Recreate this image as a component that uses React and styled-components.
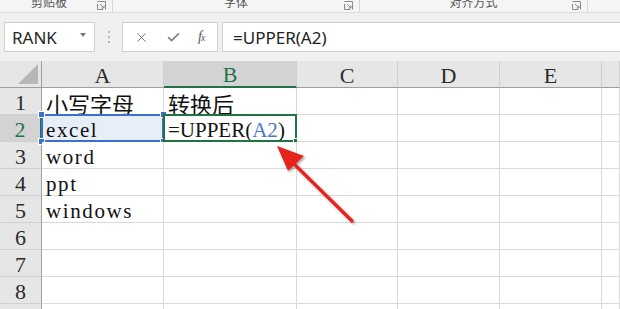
import React from "react";
import styled, { createGlobalStyle } from "styled-components";
import { X, Check } from "lucide-react";

const GlobalStyle = createGlobalStyle`
  html, body {
    margin: 0;
    padding: 0;
    background: #ffffff;
    overflow: hidden;
  }
`;

const Page = styled.div`
  width: 620px;
  height: 309px;
  overflow: hidden;
  position: relative;
  background: #f3f3f3;
  font-family: "Noto Sans", "Noto Sans CJK SC", sans-serif;
`;

const RibbonStrip = styled.div`
  display: flex;
  height: 12px;
  overflow: hidden;
  background: #f5f5f5;
  border-bottom: 1px solid #dcdcdc;
`;

const RibbonGroup = styled.div`
  flex: 0 0 ${(p) => p.$width}px;
  position: relative;
  display: flex;
  justify-content: center;
  border-right: 1px solid #d6d6d6;
  box-sizing: border-box;
`;

const GroupLabel = styled.span`
  margin-top: -6px;
  margin-left: ${(p) => p.$shift || 0}px;
  font-family: "Noto Sans CJK SC", sans-serif;
  font-size: 12px;
  line-height: 16px;
  color: #555;
`;

const Launcher = styled.svg`
  position: absolute;
  right: 6px;
  top: 1px;
`;

const FormulaBar = styled.div`
  display: flex;
  align-items: stretch;
  height: 30px;
  padding: 9px 0 9px 4px;
  background: #f0f0f0;
`;

const NameBox = styled.div`
  width: 91px;
  box-sizing: border-box;
  border: 1px solid #cfcfcf;
  background: #fff;
  display: flex;
  align-items: center;
  justify-content: space-between;
  padding: 0 8px 0 7px;
  font-size: 17px;
  color: #262626;
`;

const DropArrow = styled.span`
  width: 0;
  height: 0;
  border-left: 3.5px solid transparent;
  border-right: 3.5px solid transparent;
  border-top: 4px solid #7a7a7a;
  margin-top: -4px;
`;

const Grip = styled.div`
  width: 27px;
  display: flex;
  flex-direction: column;
  align-items: center;
  justify-content: center;
  gap: 3px;

  span {
    width: 2px;
    height: 2px;
    background: #b9b9b9;
  }
`;

const ButtonGroup = styled.div`
  width: 96px;
  box-sizing: border-box;
  border: 1px solid #cfcfcf;
  background: #fff;
  display: flex;
  align-items: center;
  justify-content: space-around;
  padding: 0 4px 0 2px;
  color: #6b6b6b;
`;

const Fx = styled.span`
  font-family: "Liberation Serif", serif;
  font-style: italic;
  font-size: 14px;
  color: #555;
  letter-spacing: -1px;

  small {
    font-size: 10px;
  }
`;

const FormulaInput = styled.div`
  flex: 1;
  margin-left: 4px;
  border: 1px solid #cfcfcf;
  border-right: none;
  background: #fff;
  display: flex;
  align-items: center;
  padding-left: 10px;
  font-size: 17px;
  color: #222;
`;

const Grid = styled.div`
  position: relative;
  display: grid;
  grid-template-columns: 42px 122px 133px 101px 102px 102px 1fr;
  grid-auto-rows: 27px;
  background: #fff;
`;

const Corner = styled.div`
  background: #e6e6e6;
  border-right: 1px solid #9e9e9e;
  border-bottom: 1px solid #9e9e9e;
  box-sizing: border-box;
  position: relative;

  &::after {
    content: "";
    position: absolute;
    right: 3px;
    bottom: 3px;
    width: 0;
    height: 0;
    border-left: 20px solid transparent;
    border-bottom: 20px solid #b7b7b7;
  }
`;

const ColHead = styled.div`
  background: ${(p) => (p.$active ? "#d3d3d3" : "#e6e6e6")};
  color: ${(p) => (p.$active ? "#217346" : "#2b2b2b")};
  border-right: 1px solid #cfcfcf;
  border-bottom: ${(p) => (p.$active ? "2px solid #217346" : "1px solid #9e9e9e")};
  box-sizing: border-box;
  display: flex;
  align-items: center;
  justify-content: center;
  font-family: "Liberation Serif", serif;
  font-size: 22px;
  line-height: 1;
  padding-top: 3px;
`;

const RowHead = styled.div`
  background: ${(p) => (p.$active ? "#d3d3d3" : "#e6e6e6")};
  color: ${(p) => (p.$active ? "#217346" : "#2b2b2b")};
  border-right: ${(p) => (p.$active ? "2px solid #217346" : "1px solid #9e9e9e")};
  border-bottom: 1px solid #cfcfcf;
  box-sizing: border-box;
  display: flex;
  align-items: center;
  justify-content: center;
  font-family: "Liberation Serif", serif;
  font-size: 22px;
  line-height: 1;
  padding-top: 3px;
`;

const Cell = styled.div`
  position: relative;
  border-right: 1px solid #d9d9d9;
  border-bottom: 1px solid #d9d9d9;
  box-sizing: border-box;
  background: ${(p) => (p.$ref ? "#e8eef8" : "#fff")};
  display: flex;
  align-items: flex-end;
  padding: 0 0 0 4px;
  font-family: ${(p) =>
    p.$cjk ? '"Noto Sans CJK SC", serif' : '"Liberation Serif", serif'};
  font-size: ${(p) => (p.$cjk ? "22px" : "21px")};
  letter-spacing: ${(p) => (p.$spaced ? "1.6px" : "0")};
  line-height: 1;
  color: #111;
  white-space: nowrap;
`;

const RefText = styled.span`
  color: #4a77c9;
`;

const SelectionBox = styled.div`
  position: absolute;
  left: -1px;
  top: -1px;
  right: -1px;
  bottom: -1px;
  border: 2px solid ${(p) => p.$color};
  pointer-events: none;
`;

const Handle = styled.span`
  position: absolute;
  width: 5px;
  height: 5px;
  background: ${(p) => p.$color};
  border: 1px solid #fff;
  ${(p) => (p.$x === "l" ? "left: -4px;" : "right: -4px;")}
  ${(p) => (p.$y === "t" ? "top: -4px;" : "bottom: -4px;")}
`;

const ArrowLayer = styled.svg`
  position: absolute;
  left: 0;
  top: 0;
  pointer-events: none;
  overflow: visible;
`;

const columns = ["A", "B", "C", "D", "E"];

const data = {
  1: ["小写字母", "转换后"],
  3: ["word"],
  4: ["ppt"],
  5: ["windows"],
};

function LauncherIcon() {
  return (
    <Launcher width="9" height="9" viewBox="0 0 9 9">
      <path d="M0.5 3 V8.5 H6" fill="none" stroke="#8a8a8a" strokeWidth="1" />
      <path d="M0.5 0.5 H8.5 V8.5" fill="none" stroke="#8a8a8a" strokeWidth="1" />
      <path d="M3 3 L7 7 M7 4.5 V7 H4.5" fill="none" stroke="#8a8a8a" strokeWidth="1" />
    </Launcher>
  );
}

export default function App() {
  const rows = [1, 2, 3, 4, 5, 6, 7, 8, 9];

  return (
    <Page>
      <GlobalStyle />
      <RibbonStrip>
        <RibbonGroup $width={113}>
          <GroupLabel $shift={-14}>剪贴板</GroupLabel>
          <LauncherIcon />
        </RibbonGroup>
        <RibbonGroup $width={247}>
          <GroupLabel>字体</GroupLabel>
          <LauncherIcon />
        </RibbonGroup>
        <RibbonGroup $width={228}>
          <GroupLabel>对齐方式</GroupLabel>
          <LauncherIcon />
        </RibbonGroup>
      </RibbonStrip>

      <FormulaBar>
        <NameBox>
          RANK
          <DropArrow />
        </NameBox>
        <Grip>
          <span />
          <span />
          <span />
        </Grip>
        <ButtonGroup>
          <X size={15} strokeWidth={1.4} />
          <Check size={15} strokeWidth={2.6} color="#7a7a7a" />
          <Fx>
            f<small>x</small>
          </Fx>
        </ButtonGroup>
        <FormulaInput>=UPPER(A2)</FormulaInput>
      </FormulaBar>

      <Grid>
        <Corner />
        {columns.map((c) => (
          <ColHead key={c} $active={c === "B"}>
            {c}
          </ColHead>
        ))}
        <ColHead />

        {rows.map((r) => {
          const vals = data[r] || [];
          return (
            <React.Fragment key={r}>
              <RowHead $active={r === 2}>{r}</RowHead>
              {r === 2 ? (
                <>
                  <Cell $ref $spaced>
                    excel
                    <SelectionBox $color="#3c6fcf" />
                    <Handle $color="#3c6fcf" $x="l" $y="t" />
                    <Handle $color="#3c6fcf" $x="r" $y="t" />
                    <Handle $color="#3c6fcf" $x="l" $y="b" />
                    <Handle $color="#3c6fcf" $x="r" $y="b" />
                  </Cell>
                  <Cell>
                    =UPPER(<RefText>A2</RefText>)
                    <SelectionBox $color="#217346" />
                    <Handle $color="#217346" $x="r" $y="b" />
                  </Cell>
                </>
              ) : (
                <>
                  <Cell $cjk={r === 1} $spaced={r > 1}>
                    {vals[0]}
                  </Cell>
                  <Cell $cjk={r === 1}>{vals[1]}</Cell>
                </>
              )}
              <Cell />
              <Cell />
              <Cell />
              <Cell />
            </React.Fragment>
          );
        })}

        <ArrowLayer width="620" height="250">
          <defs>
            <filter id="shadow" x="-20%" y="-20%" width="140%" height="140%">
              <feDropShadow dx="1.5" dy="1.5" stdDeviation="1.2" floodColor="#000" floodOpacity="0.35" />
            </filter>
          </defs>
          <g filter="url(#shadow)">
            <line x1="352" y1="160" x2="290" y2="99" stroke="#e5221c" strokeWidth="3.2" strokeLinecap="round" />
            <polygon points="277,85 304,95 288,110" fill="#e5221c" />
          </g>
        </ArrowLayer>
      </Grid>
    </Page>
  );
}
